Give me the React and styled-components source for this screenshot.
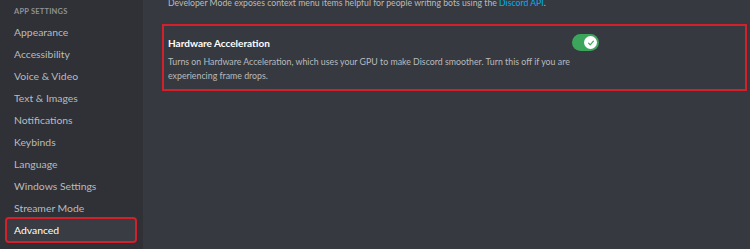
import React from "react";
import styled, { createGlobalStyle } from "styled-components";

const Global = createGlobalStyle`
  html, body {
    margin: 0;
    padding: 0;
    background: #36393f;
    overflow: hidden;
  }
  * { box-sizing: border-box; }
`;

const Page = styled.div`
  display: flex;
  width: 750px;
  height: 249px;
  font-family: Lato, "Noto Sans", sans-serif;
  background: #36393f;
  overflow: hidden;
`;

const Sidebar = styled.nav`
  width: 143px;
  flex-shrink: 0;
  background: #2f3136;
  padding: 6px 8px 0 7px;
  display: flex;
  flex-direction: column;
`;

const Header = styled.div`
  height: 15px;
  padding-left: 7px;
  font-size: 7.5px;
  font-weight: 700;
  letter-spacing: 0.2px;
  color: #8e9297;
  text-transform: uppercase;
  line-height: 12px;
`;

const Item = styled.div`
  height: 22px;
  line-height: 22px;
  padding-left: 7px;
  font-size: 10.4px;
  border-radius: 2px;
  color: ${(p) => (p.$active ? "#ffffff" : "#b9bbbe")};
  background: ${(p) => (p.$active ? "#393c42" : "transparent")};
  outline: ${(p) => (p.$active ? "2px solid #d3202b" : "none")};
  outline-offset: 0;
`;

const Main = styled.main`
  flex: 1;
  padding: 0 0 0 19px;
`;

const Note = styled.p`
  margin: -4px 0 0 6px;
  font-size: 8.7px;
  line-height: 14px;
  color: #b9bbbe;
`;

const Link = styled.span`
  color: #00aff4;
`;

const Highlight = styled.section`
  margin-top: 14px;
  width: 585px;
  height: 67px;
  border: 2px solid #d3202b;
  padding: 8px 0 0 4px;
`;

const Row = styled.div`
  width: 431px;
  display: flex;
  align-items: center;
  justify-content: space-between;
`;

const Title = styled.div`
  font-size: 10px;
  font-weight: 700;
  color: #ffffff;
  line-height: 16px;
`;

const Desc = styled.p`
  margin: 4px 0 0;
  width: 410px;
  font-size: 8.8px;
  line-height: 14px;
  color: #b9bbbe;
`;

const Switch = styled.div`
  width: 27px;
  height: 17px;
  border-radius: 9px;
  background: #3ba55c;
  display: flex;
  align-items: center;
  justify-content: flex-end;
  padding-right: 2px;
`;

const Knob = styled.div`
  width: 13px;
  height: 13px;
  border-radius: 50%;
  background: #ffffff;
  display: flex;
  align-items: center;
  justify-content: center;
`;

const items = [
  "Appearance",
  "Accessibility",
  "Voice & Video",
  "Text & Images",
  "Notifications",
  "Keybinds",
  "Language",
  "Windows Settings",
  "Streamer Mode",
  "Advanced",
];

export default function App() {
  return (
    <Page>
      <Global />
      <Sidebar>
        <Header>App Settings</Header>
        {items.map((name) => (
          <Item key={name} $active={name === "Advanced"}>
            {name}
          </Item>
        ))}
      </Sidebar>
      <Main>
        <Note>
          Developer Mode exposes context menu items helpful for people writing
          bots using the <Link>Discord API</Link>.
        </Note>
        <Highlight>
          <Row>
            <Title>Hardware Acceleration</Title>
            <Switch>
              <Knob>
                <svg width="8" height="8" viewBox="0 0 20 20">
                  <path
                    d="M4 10.5l4 4 8-9"
                    fill="none"
                    stroke="#3ba55c"
                    strokeWidth="3"
                    strokeLinecap="round"
                    strokeLinejoin="round"
                  />
                </svg>
              </Knob>
            </Switch>
          </Row>
          <Desc>
            Turns on Hardware Acceleration, which uses your GPU to make Discord
            smoother. Turn this off if you are experiencing frame drops.
          </Desc>
        </Highlight>
      </Main>
    </Page>
  );
}
